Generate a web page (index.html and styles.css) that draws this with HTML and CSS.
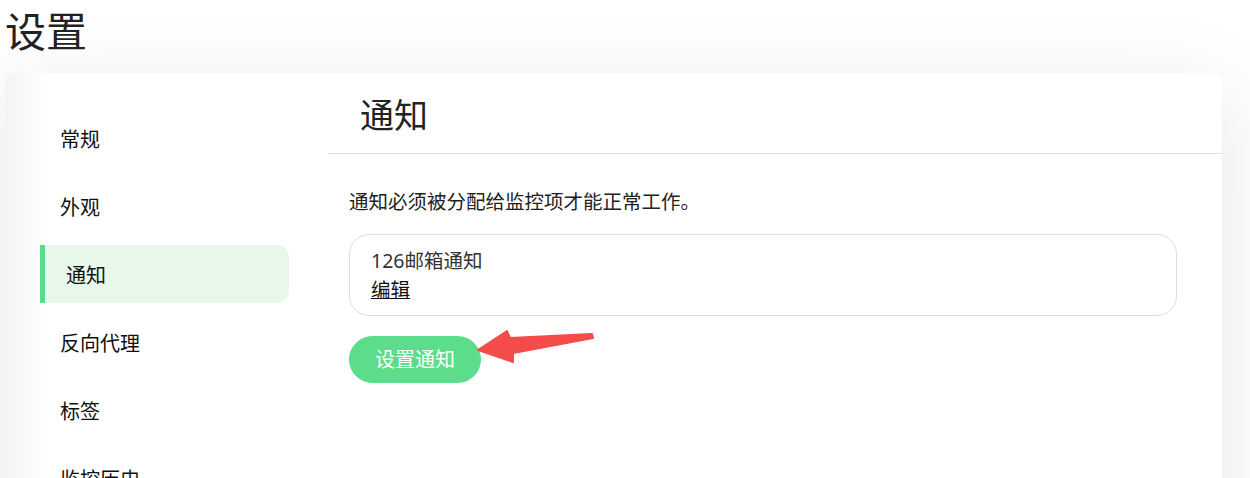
FILE: index.html
```html
<!DOCTYPE html>
<html lang="zh-CN">
<head>
<meta charset="utf-8">
<title>设置</title>
<link rel="stylesheet" href="styles.css">
</head>
<body>
<div class="page">
  <h1 class="title">设置</h1>
  <div class="card">
    <nav class="sidebar">
      <div class="item">常规</div>
      <div class="item">外观</div>
      <div class="item active">通知</div>
      <div class="item">反向代理</div>
      <div class="item">标签</div>
      <div class="item">监控历史</div>
      <div class="item">Docker 宿主</div>
      <div class="item">安全</div>
    </nav>
    <section class="content">
      <div class="header">通知</div>
      <div class="body">
        <p class="desc">通知必须被分配给监控项才能正常工作。</p>
        <div class="list">
          <div class="list-item">
            <div class="name">126邮箱通知</div>
            <a class="edit" href="#">编辑</a>
          </div>
        </div>
        <div class="actions">
          <button class="btn">设置通知</button>
          <svg class="arrow" width="122" height="40" viewBox="0 0 122 40">
            <polygon points="2,22 31,3 34,10 116,6 117,10 37,25 37,34" fill="#f44b4b" stroke="#f44b4b" stroke-width="2" stroke-linejoin="round"/>
          </svg>
        </div>
        <h5 class="subheading">监控项 Toast 通知</h5>
      </div>
    </section>
  </div>
</div>
</body>
</html>
```

FILE: styles.css
```css
html, body {
  margin: 0;
  padding: 0;
  height: 100%;
  overflow: hidden;
}
body {
  background: #ffffff;
  color: #212529;
  font-family: "Noto Sans", "Noto Sans CJK SC", sans-serif;
}
.page {
  padding: 7px 28px 0 5px;
}
.title {
  margin: 0 0 18px 0;
  font-size: 41px;
  line-height: 48px;
  font-weight: 400;
  color: #222;
}
.card {
  display: flex;
  border-radius: 10px;
  background: linear-gradient(90deg, #f3f3f3 0, #ffffff 42px);
  box-shadow: 0 19px 88px rgba(0, 0, 0, 0.1);
  min-height: 700px;
}
.sidebar {
  width: 249px;
  padding: 36px 39px 0 35px;
  flex: none;
}
.item {
  height: 58px;
  display: flex;
  align-items: center;
  padding-left: 20px;
  margin-bottom: 10px;
  font-size: 20px;
  color: #111;
  border-radius: 0 12px 12px 0;
  white-space: nowrap;
}
.item.active {
  background: #e7f8eb;
  border-left: 5px solid #5cdd8b;
  padding-left: 21px;
}
.content {
  flex: 1;
  min-width: 0;
}
.header {
  padding: 22px 32px 18px;
  font-size: 34px;
  line-height: 40px;
  color: #222;
  border-bottom: 1px solid #dee2e6;
}
.body {
  padding: 0 45px 0 21px;
}
.desc {
  margin: 33px 0 18px 0;
  font-size: 19.5px;
  line-height: 29px;
  color: #222;
}
.list-item {
  border: 1px solid #dedede;
  border-radius: 20px;
  padding: 11px 21px;
  font-size: 19.5px;
  line-height: 29px;
  color: #333;
}
.edit {
  color: #111;
  text-decoration: underline;
}
.actions {
  position: relative;
  margin-top: 20px;
}
.btn {
  height: 47px;
  padding: 0 26px;
  border: none;
  border-radius: 24px;
  background: #5cdd8b;
  color: #fff;
  font-family: "Noto Sans", "Noto Sans CJK SC", sans-serif;
  font-size: 20px;
  line-height: 47px;
}
.arrow {
  position: absolute;
  left: 127px;
  top: -8px;
}
.subheading {
  margin: 92px 0 0 48px;
  font-size: 20px;
  font-weight: 500;
  color: #222;
}
```
